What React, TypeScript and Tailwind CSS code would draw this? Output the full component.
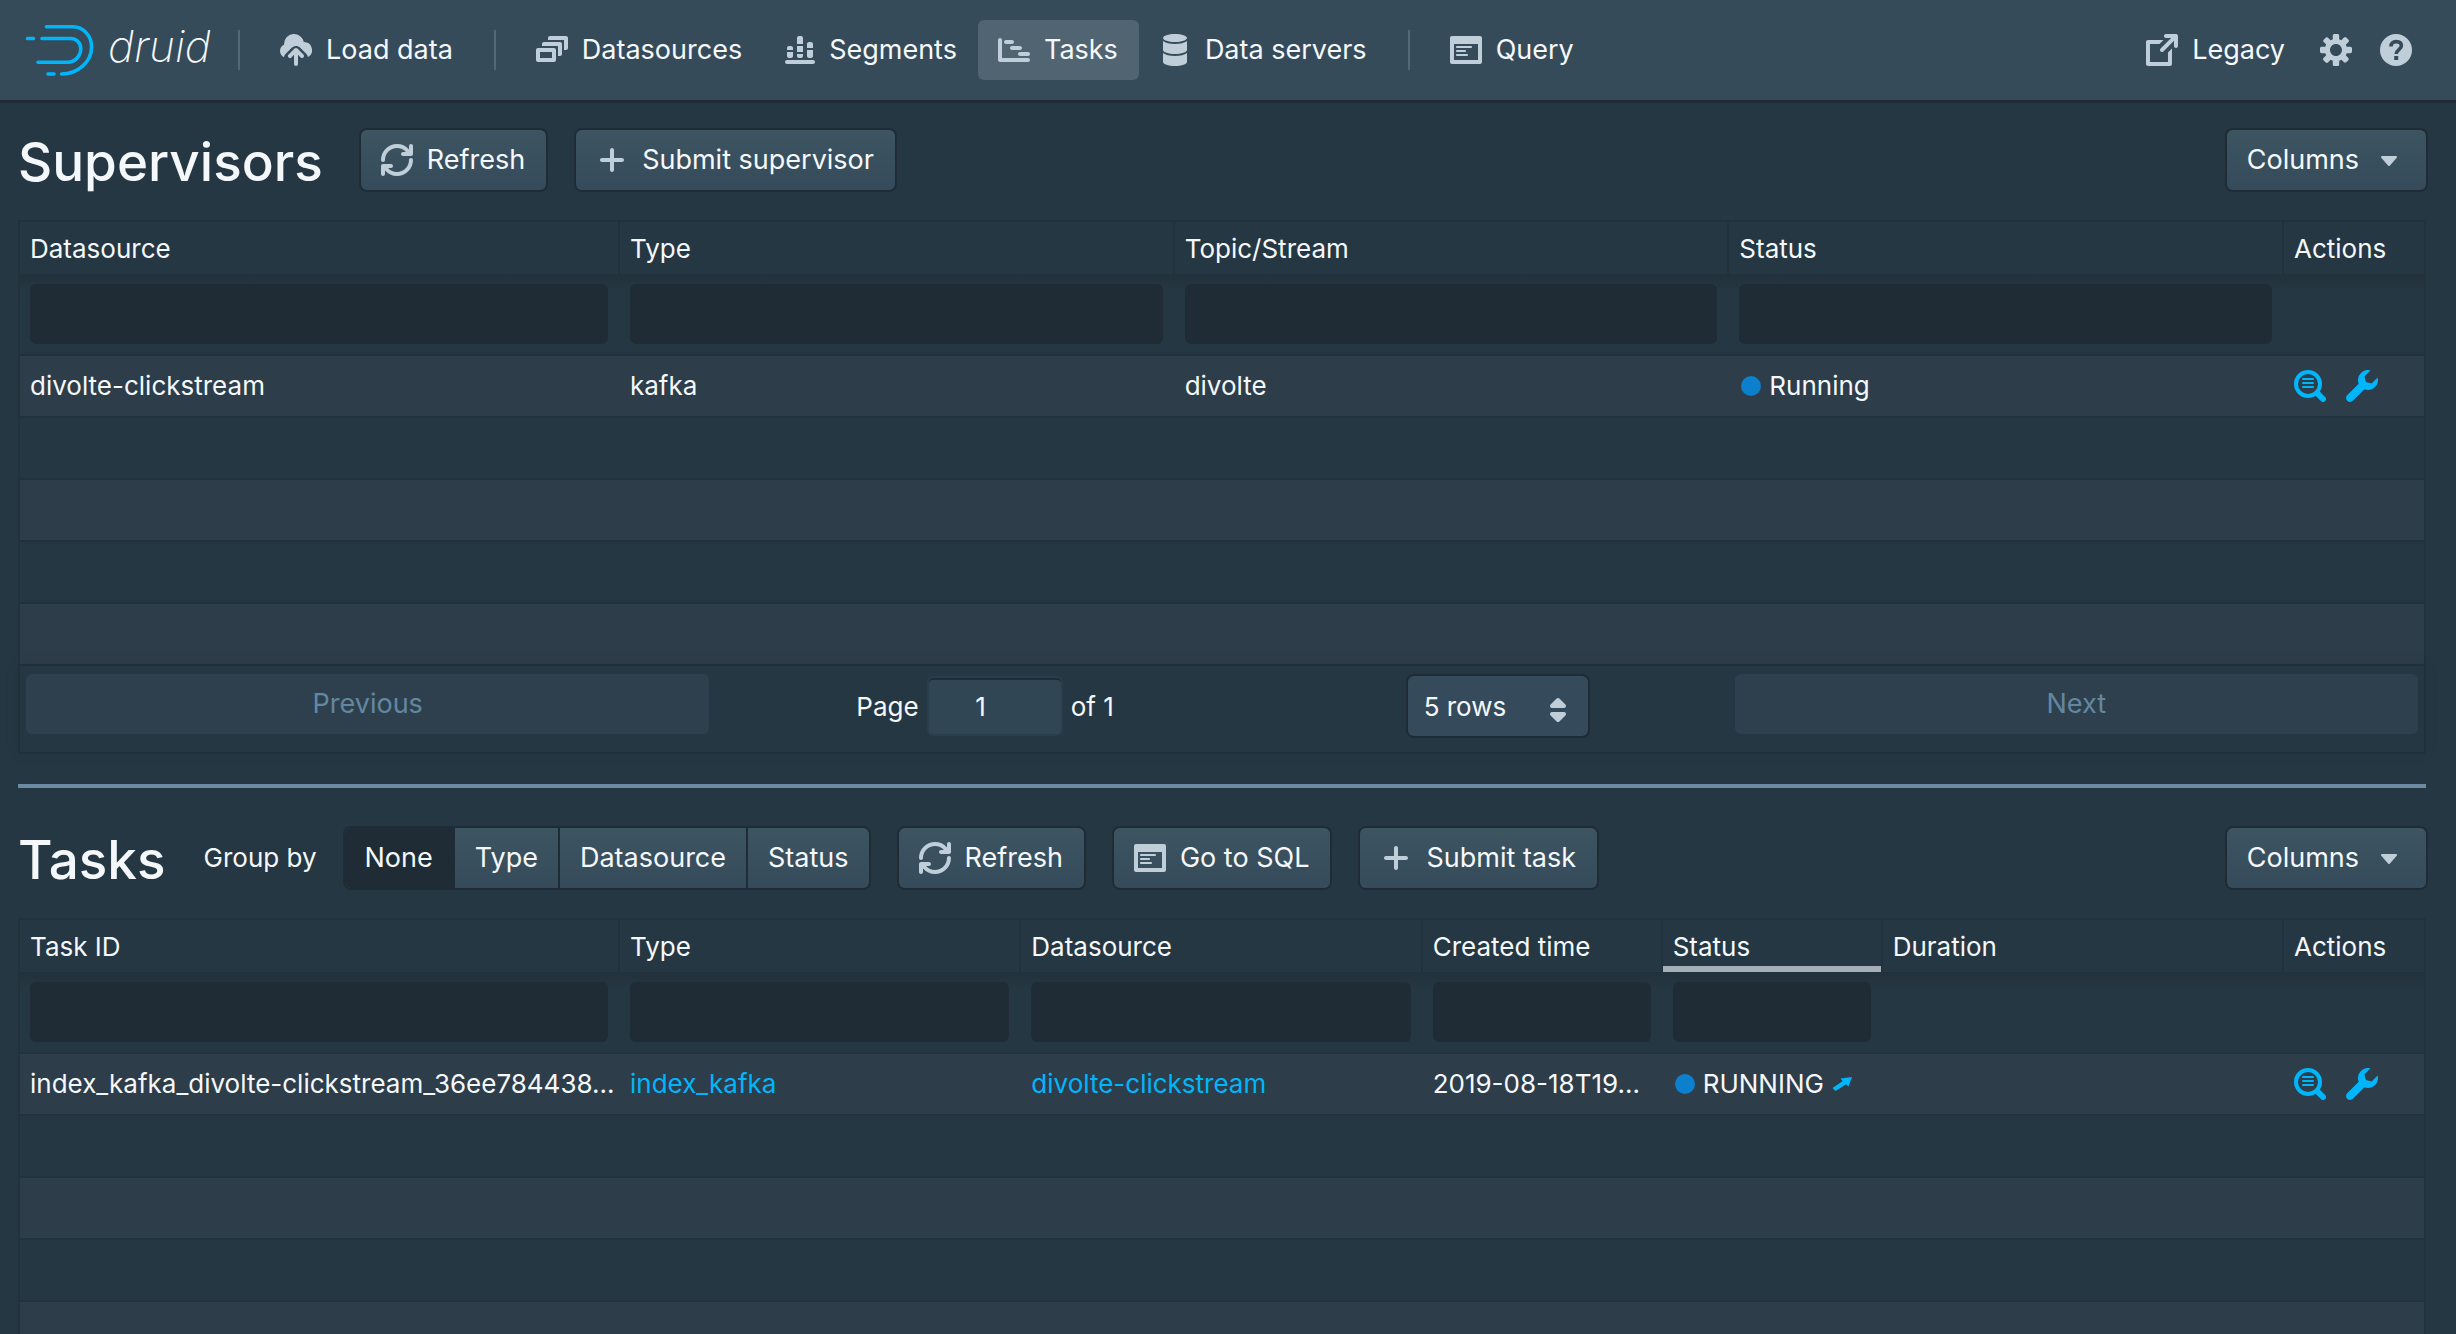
import type { ReactNode } from "react";
import { clsx } from "clsx";

const ICONS = {
  cloudUpload:
    "M8.71 7.29C8.53 7.11 8.28 7 8 7s-.53.11-.71.29l-3 3a1.003 1.003 0 001.42 1.42L7 10.41V15c0 .55.45 1 1 1s1-.45 1-1v-4.59l1.29 1.3c.18.18.43.29.71.29a1.003 1.003 0 00.71-1.71l-3-3zM12 4c-.03 0-.07 0-.1.01A5 5 0 002 5c0 .11.01.22.02.33A3.51 3.51 0 000 8.5c0 1.41.84 2.61 2.03 3.17.05-.75.35-1.3.84-1.79l3-3A3 3 0 018 6c.8 0 1.55.3 2.12.87l3 3c.45.45.75 1 .83 1.62A4 4 0 0012 4z",
  multiSelect:
    "M12 3.98H4c-.55 0-1 .45-1 1v1h8v5h1c.55 0 1-.45 1-1v-5c0-.55-.45-1-1-1zm3-3H7c-.55 0-1 .45-1 1v1h8v5h1c.55 0 1-.45 1-1v-5c0-.55-.45-1-1-1zm-6 6H1c-.55 0-1 .45-1 1v5c0 .55.45 1 1 1h8c.55 0 1-.45 1-1v-5c0-.55-.45-1-1-1zm-1 5H2v-3h6v3z",
  stackedChart:
    "M10 2c0-.55-.45-1-1-1H8c-.55 0-1 .45-1 1v3h3V2zm3 10h1c.55 0 1-.45 1-1V8h-3v3c0 .55.45 1 1 1zm2-7c0-.55-.45-1-1-1h-1c-.55 0-1 .45-1 1v2h3V5zm-5 1H7v3h3V6zM5 7c0-.55-.45-1-1-1H3c-.55 0-1 .45-1 1v1h3V7zm3 5h1c.55 0 1-.45 1-1v-1H7v1c0 .55.45 1 1 1zm7 1H2c-.55 0-1 .45-1 1s.45 1 1 1h13c.55 0 1-.45 1-1s-.45-1-1-1zM3 12h1c.55 0 1-.45 1-1V9H2v2c0 .55.45 1 1 1z",
  ganttChart:
    "M4 5h3c.55 0 1-.45 1-1s-.45-1-1-1H4c-.55 0-1 .45-1 1s.45 1 1 1zm3 3h4c.55 0 1-.45 1-1s-.45-1-1-1H7c-.55 0-1 .45-1 1s.45 1 1 1zm8 4H2V3c0-.55-.45-1-1-1s-1 .45-1 1v10c0 .55.45 1 1 1h14c.55 0 1-.45 1-1s-.45-1-1-1zm-4-3c-.55 0-1 .45-1 1s.45 1 1 1h4c.55 0 1-.45 1-1s-.45-1-1-1h-4z",
  database:
    "M8 4c3.31 0 6-.9 6-2s-2.69-2-6-2C4.68 0 2 .9 2 2s2.68 2 6 2zm-6-.52V8c0 1.1 2.69 2 6 2s6-.9 6-2V3.48C12.78 4.4 10.56 5 8 5s-4.78-.6-6-1.52zm0 6V14c0 1.1 2.69 2 6 2s6-.9 6-2V9.48C12.78 10.4 10.56 11 8 11s-4.78-.6-6-1.52z",
  application:
    "M3.5 7h7c.28 0 .5-.22.5-.5s-.22-.5-.5-.5h-7c-.28 0-.5.22-.5.5s.22.5.5.5zM15 1H1c-.55 0-1 .45-1 1v12c0 .55.45 1 1 1h14c.55 0 1-.45 1-1V2c0-.55-.45-1-1-1zm-1 12H2V5h12v8zM3.5 9h4c.28 0 .5-.22.5-.5S7.78 8 7.5 8h-4c-.28 0-.5.22-.5.5s.22.5.5.5zm0 2h5c.28 0 .5-.22.5-.5s-.22-.5-.5-.5h-5c-.28 0-.5.22-.5.5s.22.5.5.5z",
  share:
    "M10.99 13.99h-9v-9h4.76l2-2H.99c-.55 0-1 .45-1 1v11c0 .55.45 1 1 1h11c.55 0 1-.45 1-1V7.24l-2 2v4.75zm4-14h-5c-.55 0-1 .45-1 1s.45 1 1 1h2.59L7.29 7.28a1 1 0 00-.3.71 1.003 1.003 0 001.71.71l5.29-5.29V6c0 .55.45 1 1 1s1-.45 1-1V1c0-.56-.45-1.01-1-1.01z",
  cog: "M15.19 6.39h-1.85c-.11-.37-.27-.71-.45-1.04l1.36-1.36c.31-.31.31-.82 0-1.13l-1.13-1.13a.803.803 0 00-1.13 0l-1.36 1.36c-.33-.17-.67-.33-1.04-.44V.79c0-.44-.36-.8-.8-.8h-1.6c-.44 0-.8.36-.8.8v1.86c-.39.12-.75.28-1.1.47l-1.3-1.3c-.3-.3-.79-.3-1.09 0L1.82 2.91c-.3.3-.3.79 0 1.09l1.3 1.3c-.2.34-.36.7-.48 1.09H.79c-.44 0-.8.36-.8.8v1.6c0 .44.36.8.8.8h1.85c.11.37.27.71.45 1.04l-1.36 1.36c-.31.31-.31.82 0 1.13l1.13 1.13c.31.31.82.31 1.13 0l1.36-1.36c.33.18.67.33 1.04.44v1.86c0 .44.36.8.8.8h1.6c.44 0 .8-.36.8-.8v-1.86c.39-.12.75-.28 1.1-.47l1.3 1.3c.3.3.79.3 1.09 0l1.09-1.09c.3-.3.3-.79 0-1.09l-1.3-1.3c.19-.35.36-.71.48-1.1h1.85c.44 0 .8-.36.8-.8v-1.6a.816.816 0 00-.81-.79zM7.99 11c-1.66 0-3-1.34-3-3s1.34-3 3-3 3 1.34 3 3-1.34 3-3 3z",
  refresh:
    "M14.99 6.99c-.55 0-1 .45-1 1 0 3.31-2.69 6-6 6-1.77 0-3.36-.78-4.46-2H5c.55 0 1-.45 1-1s-.45-1-1-1H1c-.55 0-1 .45-1 1v4c0 .55.45 1 1 1s1-.45 1-1v-1.74a7.95 7.95 0 006 2.74c4.42 0 8-3.58 8-8 0-.55-.46-1-1.01-1zM15 0c-.55 0-1 .45-1 1v1.74A7.95 7.95 0 008 0C3.58 0 0 3.58 0 8c0 .55.45 1 1 1s1-.45 1-1c0-3.31 2.69-6 6-6 1.77 0 3.36.78 4.46 2H11c-.55 0-1 .45-1 1s.45 1 1 1h4c.55 0 1-.45 1-1V1c0-.55-.45-1-1-1z",
  plus: "M13 7H9V3c0-.55-.45-1-1-1s-1 .45-1 1v4H3c-.55 0-1 .45-1 1s.45 1 1 1h4v4c0 .55.45 1 1 1s1-.45 1-1V9h4c.55 0 1-.45 1-1s-.45-1-1-1z",
  caretDown:
    "M12 6.5c0-.28-.22-.5-.5-.5h-7a.495.495 0 00-.37.83l3.5 4c.09.1.22.17.37.17s.28-.07.37-.17l3.5-4c.08-.09.13-.2.13-.33z",
  doubleCaret:
    "M5 7h6a1.003 1.003 0 00.71-1.71l-3-3C8.53 2.11 8.28 2 8 2s-.53.11-.71.29l-3 3A1.003 1.003 0 005 7zm6 2H5a1.003 1.003 0 00-.71 1.71l3 3c.18.18.43.29.71.29s.53-.11.71-.29l3-3A1.003 1.003 0 0011 9z",
  wrench:
    "M15.83 3.7l-3.06 3.05-2.84-.7-.7-2.83L12.29.17a5.004 5.004 0 00-4.83 1.29 4.967 4.967 0 00-1.12 5.36L.58 12.58c-.36.36-.58.86-.58 1.41 0 1.1.9 2 2 2 .55 0 1.05-.22 1.41-.59l5.77-5.77c1.79.69 3.91.35 5.35-1.12 1.32-1.31 1.74-3.15 1.3-4.81z",
};

type IconName = keyof typeof ICONS;

function Icon({ name, className }: { name: IconName; className?: string }) {
  return (
    <svg
      viewBox="0 0 16 16"
      aria-hidden="true"
      className={clsx("size-8 shrink-0 fill-current", className ?? "text-[#bfced8]")}
    >
      <path fillRule="evenodd" d={ICONS[name]} />
    </svg>
  );
}

function HelpIcon() {
  return (
    <svg viewBox="0 0 16 16" aria-hidden="true" className="size-8 text-[#bfced8]">
      <circle cx="8" cy="8" r="8" fill="currentColor" />
      <g stroke="#354b5a" fill="none">
        <path strokeWidth="1.8" d="M5.500 6.200C5.500 4.600 6.500 3.800 8.100 3.800s2.600.8 2.600 2.100c0 1.900-2.600 1.900-2.600 4.100" />
        <path strokeWidth="2" d="M8.100 11v2" />
      </g>
    </svg>
  );
}

function SearchTemplateIcon() {
  return (
    <svg viewBox="0 0 16 16" aria-hidden="true" className="size-8" fill="none" stroke="currentColor">
      <circle cx="7" cy="7" r="6" strokeWidth="2" />
      <path strokeWidth="3" strokeLinecap="round" d="M11.8 11.8l2.7 2.7" />
      <path strokeWidth="1" strokeLinecap="round" d="M4.5 4.5h5M4.5 6.5h5M4.5 8.5h5" />
    </svg>
  );
}

function Logo() {
  return (
    <a href="#" aria-label="druid" className="flex w-[214px] items-center text-[#f5f8fa]">
      <svg
        viewBox="24 22 72 56"
        aria-hidden="true"
        className="h-14 w-[72px]"
        fill="none"
        stroke="#00b6fb"
        strokeWidth="3.6"
        strokeLinecap="round"
      >
        <path d="M46.5 26.7h26.3c10.400 0 18.800 9 18.800 20.300 0 15-14 27-30 27" />
        <path d="M48 74h6M27.500 38.500h6M42 38.500h28.500c6 0 10.300 4.500 10.300 10 0 7.500-6 13.800-13.300 13.800H38" />
      </svg>
      <span className="ml-3 pb-2 text-[44px] leading-none font-extralight italic">druid</span>
    </a>
  );
}

function NavDivider() {
  return <span className="mx-5 h-10 w-0.5 bg-[#52687a]" />;
}

function NavItem({ icon, label, active }: { icon: IconName; label: string; active?: boolean }) {
  return (
    <a
      href="#"
      className={clsx(
        "flex h-[60px] items-center gap-3.5 rounded-md pr-[21px] pl-5",
        active && "bg-[#506571]",
      )}
    >
      <Icon name={icon} />
      {label}
    </a>
  );
}

function Header() {
  return (
    <header className="z-10 flex h-[100px] shrink-0 items-center bg-[#354b5a] pr-[30px] pl-6 shadow-[0_3px_0_#202c35]">
      <Logo />
      <nav className="flex grow items-center">
        <span className="mr-5 h-10 w-0.5 bg-[#52687a]" />
        <NavItem icon="cloudUpload" label="Load data" />
        <NavDivider />
        <NavItem icon="multiSelect" label="Datasources" />
        <NavItem icon="stackedChart" label="Segments" />
        <NavItem icon="ganttChart" label="Tasks" active />
        <NavItem icon="database" label="Data servers" />
        <NavDivider />
        <NavItem icon="application" label="Query" />
      </nav>
      <NavItem icon="share" label="Legacy" />
      <button aria-label="Settings" className="flex size-[60px] items-center justify-center">
        <Icon name="cog" />
      </button>
      <button aria-label="Help" className="flex size-[60px] items-center justify-center">
        <HelpIcon />
      </button>
    </header>
  );
}

const RAISED = "bg-linear-to-b from-[#3d5461] to-[#354b5b] shadow-[0_0_0_2px_#202c35]";

function Button({ icon, children, caret }: { icon?: IconName; children: ReactNode; caret?: boolean }) {
  return (
    <button className={clsx("flex h-[60px] items-center gap-3.5 rounded-md pr-[21px] pl-5", RAISED)}>
      {icon && <Icon name={icon} />}
      {children}
      {caret && <Icon name="caretDown" />}
    </button>
  );
}

function ControlBar({ title, children }: { title: string; children: ReactNode }) {
  return (
    <div className="mb-[30px] flex h-[60px] items-center gap-[30px]">
      <h1 className="mr-2 pt-1 text-[53px] leading-[60px] font-medium">{title}</h1>
      {children}
      <div className="ml-auto">
        <Button caret>Columns</Button>
      </div>
    </div>
  );
}

type Column = { label: string; width?: string; filter?: boolean; sorted?: boolean };

function DataTable({ columns, cells, rows }: { columns: Column[]; cells: ReactNode[]; rows: number }) {
  return (
    <table className="w-full table-fixed border-separate border-spacing-0 text-left text-[26px] leading-8">
      <colgroup>
        {columns.map((c) => (
          <col key={c.label} className={c.width} />
        ))}
      </colgroup>
      <thead>
        <tr className="h-[52px]">
          {columns.map((c) => (
            <th
              key={c.label}
              scope="col"
              className={clsx(
                "border-r-2 border-[#22323c] px-2.5 pt-0.5 font-normal last:border-r-0",
                c.sorted && "shadow-[inset_0_-6px_0_#a4afb7]",
              )}
            >
              {c.label}
            </th>
          ))}
        </tr>
        <tr className="h-[82px] bg-linear-to-b from-[#22313b] to-[#253743] to-20%">
          {columns.map((c) => (
            <td key={c.label} className="border-b-2 border-[#22323c] pr-3 pl-2.5">
              {c.filter !== false && (
                <input
                  type="text"
                  aria-label={`Filter ${c.label}`}
                  className="block h-[60px] w-full rounded-md bg-[#1f2c35] px-4"
                />
              )}
            </td>
          ))}
        </tr>
      </thead>
      <tbody>
        {Array.from({ length: rows }, (_, row) => (
          <tr key={row} className="h-[62px] odd:bg-[#2d3d4a]">
            {columns.map((c, i) => (
              <td key={c.label} className="truncate border-b-2 border-[#22323c] pl-2.5">
                {row === 0 && cells[i]}
              </td>
            ))}
          </tr>
        ))}
      </tbody>
    </table>
  );
}

function Actions() {
  return (
    <div className="flex gap-5 text-[#00b6fb]">
      <button aria-label="Details">
        <SearchTemplateIcon />
      </button>
      <button aria-label="More actions">
        <Icon name="wrench" className="text-[#00b6fb]" />
      </button>
    </div>
  );
}

function Status({ children }: { children: ReactNode }) {
  return (
    <span className="flex items-center gap-2 pl-0.5">
      <span className="size-5 rounded-full bg-[#0c7fcd]" />
      {children}
    </span>
  );
}

function Pagination() {
  const step = "h-[60px] grow basis-0 rounded-md bg-[#2e404e] text-[#6487a0]";
  return (
    <div className="flex px-1.5 pt-2 pb-3.5 shadow-[0_0_15px_rgba(0,0,0,0.1)]">
      <button disabled className={step}>
        Previous
      </button>
      <div className="flex h-16 grow-[1.5] basis-0 items-center justify-around text-[26px]">
        <label className="flex items-center gap-2">
          Page
          <input
            type="text"
            defaultValue="1"
            className="h-[60px] w-[136px] rounded-md border-2 border-[#2b3d4a] bg-[#304655] pr-7 text-center shadow-[inset_0_2px_0_#202c35]"
          />
          of 1
        </label>
        <div className="relative">
          <select
            aria-label="Rows per page"
            className="h-[60px] w-[180px] appearance-none rounded-md bg-[#354b5b] pl-4 shadow-[0_0_0_2px_#202c35]"
          >
            <option>5 rows</option>
          </select>
          <Icon
            name="doubleCaret"
            className="pointer-events-none absolute top-[18px] right-3.5 text-[#bfced8]"
          />
        </div>
      </div>
      <button disabled className={step}>
        Next
      </button>
    </div>
  );
}

const SUPERVISOR_COLUMNS: Column[] = [
  { label: "Datasource", width: "w-[600px]" },
  { label: "Type" },
  { label: "Topic/Stream" },
  { label: "Status" },
  { label: "Actions", width: "w-[140px]", filter: false },
];

const TASK_COLUMNS: Column[] = [
  { label: "Task ID", width: "w-[600px]" },
  { label: "Type" },
  { label: "Datasource" },
  { label: "Created time", width: "w-[240px]" },
  { label: "Status", width: "w-[220px]", sorted: true },
  { label: "Duration", filter: false },
  { label: "Actions", width: "w-[140px]", filter: false },
];

const GROUPS = ["None", "Type", "Datasource", "Status"];

export default function App() {
  return (
    <div className="flex h-screen flex-col overflow-hidden bg-[#253743] font-['Inter',sans-serif] text-[27px] text-[#f5f8fa]">
      <Header />
      <main className="flex min-h-0 grow flex-col pt-[30px] pr-[30px] pl-[18px]">
        <section className="shrink-0">
          <ControlBar title="Supervisors">
            <Button icon="refresh">Refresh</Button>
            <Button icon="plus">Submit supervisor</Button>
          </ControlBar>
          <div className="border-2 border-[#22323c]">
            <DataTable
              columns={SUPERVISOR_COLUMNS}
              rows={5}
              cells={["divolte-clickstream", "kafka", "divolte", <Status>Running</Status>, <Actions />]}
            />
            <Pagination />
          </div>
        </section>

        <hr className="mt-[30px] mb-10 h-1 shrink-0 border-0 bg-[#6a8ba3]" />

        <section className="flex min-h-0 grow flex-col">
          <ControlBar title="Tasks">
            <div className="flex items-center gap-7">
              <span className="pb-0.5 text-[26px]">Group by</span>
              <div className={clsx("flex h-[60px] overflow-hidden rounded-md", RAISED)}>
                {GROUPS.map((group) => (
                  <button
                    key={group}
                    aria-pressed={group === "None"}
                    className="border-r-2 border-[#202c35] px-5 last:border-r-0 aria-pressed:bg-[#1f2c35]"
                  >
                    {group}
                  </button>
                ))}
              </div>
            </div>
            <Button icon="refresh">Refresh</Button>
            <Button icon="application">Go to SQL</Button>
            <Button icon="plus">Submit task</Button>
          </ControlBar>
          <div className="min-h-0 grow overflow-hidden border-2 border-b-0 border-[#22323c]">
            <DataTable
              columns={TASK_COLUMNS}
              rows={7}
              cells={[
                "index_kafka_divolte-clickstream_36ee784438...",
                <a href="#" className="text-[#00b6fb]">
                  index_kafka
                </a>,
                <a href="#" className="text-[#00b6fb]">
                  divolte-clickstream
                </a>,
                "2019-08-18T19...",
                <Status>
                  RUNNING
                  <a href="#" aria-label="Open location">
                    <svg viewBox="0 0 20 14" aria-hidden="true" className="h-3.5 w-5 fill-[#00b6fb]">
                      <path d="M20 0l-3.500 9.500-2.500-2.300L3.500 14 .5 11 10.500 4.300 8.500 1.500z" />
                    </svg>
                  </a>
                </Status>,
                "",
                <Actions />,
              ]}
            />
          </div>
        </section>
      </main>
    </div>
  );
}
